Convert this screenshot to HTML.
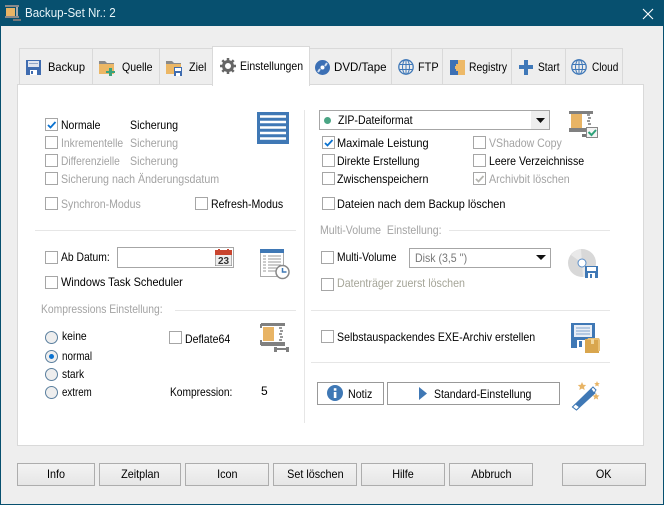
<!DOCTYPE html>
<html><head><meta charset="utf-8"><style>
html,body{margin:0;padding:0}
body{width:664px;height:505px;overflow:hidden;position:relative;background:#eee;font:12px/14px "Liberation Sans",sans-serif;color:#000}
div,svg{position:absolute}
.t{white-space:nowrap;height:14px;transform:scaleX(var(--s,.88));transform-origin:0 50%}
.d{color:#a3a3a3}
.c{width:11px;height:11px;border:1px solid #a6a6a6;background:#fff}
.r{width:11px;height:11px;border:1px solid #5a7f9e;border-radius:50%;background:#eee}
.l{background:#e6e6e6;height:1px}
.tab{top:48px;height:36px;border:1px solid #d9d9d9;border-bottom:0;border-left:0;box-sizing:border-box;background:#eee}
.b{top:463px;height:23px;box-sizing:border-box;border:1px solid #adadad;background:linear-gradient(#f3f3f3,#e6e6e6);text-align:center;line-height:21px}
.b span{display:inline-block;transform:scaleX(.9)}
</style></head><body>
<div style="left:0;top:0;width:664px;height:505px;box-sizing:border-box;border:1px solid #07506f;border-top:0"></div>
<div style="left:0;top:0;width:664px;height:26px;background:#07506f"></div>
<svg style="left:4px;top:4px" width="17" height="18" viewBox="0 0 17 18"><rect x="1" y="1" width="14" height="2" fill="#8a8a8a"/><rect x="1" y="12" width="14" height="2" fill="#8a8a8a"/><rect x="2" y="4" width="9" height="8" fill="#e8b465"/><rect x="12" y="3" width="2" height="9" fill="#aaa"/><rect x="9" y="15" width="8" height="2" fill="#777"/></svg>
<div class="t" style="--s:.89;left:25px;top:5px;color:#e8f4f8;font-size:13px;line-height:16px">Backup-Set Nr.: 2</div>
<svg style="left:642px;top:8px" width="12" height="12"><path d="M1 1L11 11M11 1L1 11" stroke="#fff" stroke-width="1.100"/></svg>

<div class="tab" style="left:19px;width:74px;border-left:1px solid #d9d9d9"></div>
<div class="tab" style="left:93px;width:67px"></div>
<div class="tab" style="left:160px;width:53px"></div>
<div class="tab" style="left:310px;width:82px"></div>
<div class="tab" style="left:392px;width:51px"></div>
<div class="tab" style="left:443px;width:69px"></div>
<div class="tab" style="left:512px;width:54px"></div>
<div class="tab" style="left:566px;width:57px"></div>
<div style="left:17px;top:84px;width:627px;height:362px;box-sizing:border-box;border:1px solid #d9d9d9;background:#fff"></div>
<div style="left:212px;top:46px;width:98px;height:40px;box-sizing:border-box;border:1px solid #d9d9d9;border-bottom:0;background:#fff"></div>

<svg style="left:26px;top:60px" width="15" height="15"><rect width="15" height="15" fill="#3f6cb0"/><rect x="2" y="1" width="11" height="6" fill="#dfe4ee"/><rect x="3" y="3" width="9" height="1" fill="#8fa5c8"/><rect x="4" y="10" width="7" height="5" fill="#fff"/><rect x="5" y="11" width="2" height="3" fill="#3f6cb0"/></svg>
<div class="t" style="--s:.925;left:48px;top:60px">Backup</div>
<svg style="left:99px;top:60px" width="16" height="16"><path d="M0 1h6l2 2h7v2H0z" fill="#8a8a8a"/><rect y="4" width="15" height="10" fill="#ecb765"/><path d="M10 8h3v3h3v2h-3v3h-3v-3H7v-2h3z" fill="#3aa27c"/></svg>
<div class="t" style="left:122px;top:60px">Quelle</div>
<svg style="left:166px;top:60px" width="16" height="16"><path d="M0 1h6l2 2h7v2H0z" fill="#8a8a8a"/><rect y="4" width="15" height="10" fill="#ecb765"/><rect x="8" y="7" width="8" height="9" fill="#3f6cb0"/><rect x="9" y="8" width="6" height="3" fill="#fff"/><rect x="10" y="13" width="4" height="3" fill="#fff"/></svg>
<div class="t" style="--s:.9;left:189px;top:60px">Ziel</div>
<svg style="left:220px;top:58px" width="16" height="16" viewBox="0 0 16 16"><circle cx="8" cy="8" r="4.500" fill="none" stroke="#666" stroke-width="3"/><path d="M8 0v3M8 13v3M0 8h3M13 8h3M2.300 2.300l2.200 2.200M11.500 11.500l2.200 2.200M13.700 2.300l-2.200 2.200M4.500 11.500l-2.200 2.200" stroke="#666" stroke-width="2.500"/></svg>
<div class="t" style="--s:.875;left:240px;top:59px">Einstellungen</div>
<svg style="left:315px;top:60px" width="15" height="15"><circle cx="7.500" cy="7.500" r="7.500" fill="#3c70b5"/><circle cx="7.500" cy="7.500" r="2" fill="#fff"/><path d="M3 12l2-3M10 6l2-3" stroke="#cfdcee" stroke-width="2"/></svg>
<div class="t" style="--s:.96;left:334px;top:60px">DVD/Tape</div>
<svg style="left:398px;top:59px" width="16" height="16"><g fill="none" stroke="#3f78b8"><circle cx="8" cy="8" r="7.200" stroke-width="1.300"/><ellipse cx="8" cy="8" rx="3.500" ry="7.200"/><path d="M1 5.500h14M1 10.500h14M8 1v14"/></g></svg>
<div class="t" style="--s:.91;left:418px;top:60px">FTP</div>
<svg style="left:450px;top:60px" width="15" height="15"><rect width="15" height="15" fill="#edb968"/><path d="M0 0h8v4H6v2H5v3h1v2h2v4H0z" fill="#3d71b5"/></svg>
<div class="t" style="--s:.864;left:469px;top:60px">Registry</div>
<svg style="left:519px;top:60px" width="14" height="15"><path d="M5 0h4v5h5v4H9v6H5V9H0V5h5z" fill="#3f78b8"/></svg>
<div class="t" style="--s:.85;left:538px;top:60px">Start</div>
<svg style="left:571px;top:59px" width="16" height="16"><g fill="none" stroke="#3f78b8"><circle cx="8" cy="8" r="7.200" stroke-width="1.300"/><ellipse cx="8" cy="8" rx="3.500" ry="7.200"/><path d="M1 5.500h14M1 10.500h14M8 1v14"/></g></svg>
<div class="t" style="--s:.84;left:592px;top:60px">Cloud</div>

<div style="left:304px;top:110px;width:1px;height:313px;background:#e6e6e6"></div>

<div class="c" style="left:45px;top:118px"></div><svg style="left:47px;top:121px" width="10" height="8"><path d="M1 4l2.500 2.500L8.500 1" fill="none" stroke="#0a72d0" stroke-width="1.800"/></svg>
<div class="t" style="--s:.87;left:61px;top:118px">Normale</div><div class="t" style="--s:.89;left:130px;top:118px">Sicherung</div>
<div class="c" style="left:45px;top:136px"></div><div class="t d" style="--s:.863;left:61px;top:136px">Inkrementelle</div><div class="t d" style="--s:.89;left:130px;top:136px">Sicherung</div>
<div class="c" style="left:45px;top:154px"></div><div class="t d" style="--s:.85;left:61px;top:154px">Differenzielle</div><div class="t d" style="--s:.89;left:130px;top:154px">Sicherung</div>
<div class="c" style="left:45px;top:172px"></div><div class="t d" style="--s:.888;left:61px;top:172px">Sicherung nach Änderungsdatum</div>
<div class="c" style="left:45px;top:197px"></div><div class="t d" style="left:61px;top:197px">Synchron-Modus</div>
<div class="c" style="left:195px;top:197px"></div><div class="t" style="left:211px;top:197px">Refresh-Modus</div>
<svg style="left:257px;top:112px" width="32" height="32"><rect width="32" height="32" fill="#3f78b5"/><path d="M3 4.500h26M3 10h26M3 15.500h26M3 21h26M3 26.500h26" stroke="#fff" stroke-width="2.500"/></svg>

<div class="l" style="left:35px;top:230px;width:261px"></div>
<div class="c" style="left:45px;top:251px"></div><div class="t" style="--s:.86;left:61px;top:250px">Ab Datum:</div>
<div style="left:117px;top:247px;width:117px;height:21px;box-sizing:border-box;border:1px solid #a6a6a6"></div>
<svg style="left:215px;top:249px" width="17" height="17"><rect y="3" width="17" height="14" fill="#eee" stroke="#777"/><rect width="17" height="5" y="1" fill="#c9452f"/><path d="M4 0v3M13 0v3" stroke="#c9452f" stroke-width="2"/><text x="8.500" y="15" font-size="10" font-weight="bold" font-family="Liberation Sans" text-anchor="middle" fill="#333">23</text></svg>
<div class="c" style="left:45px;top:276px"></div><div class="t" style="--s:.91;left:61px;top:275px">Windows Task Scheduler</div>
<svg style="left:260px;top:249px" width="30" height="31"><rect x=".5" y=".5" width="23" height="27" fill="#fff" stroke="#aaa"/><rect width="24" height="4" fill="#3f78b5"/><path d="M3 7h3M8 7h13M3 10h3M8 10h13M3 13h3M8 13h13M3 16h3M8 16h13M3 19h3M8 19h10M3 22h3M8 22h8" stroke="#999"/><circle cx="22.500" cy="23" r="6.500" fill="#fff" stroke="#888" stroke-width="1.500"/><path d="M22.500 19v4h4" fill="none" stroke="#3f78b5" stroke-width="1.500"/></svg>

<div class="t d" style="--s:.86;left:41px;top:302px">Kompressions Einstellung:</div><div class="l" style="left:175px;top:310px;width:121px"></div>
<div class="r" style="left:45px;top:331px"></div><div class="t" style="--s:.86;left:62px;top:329px">keine</div>
<div class="r" style="left:45px;top:350px"></div><div style="left:49px;top:354px;width:5px;height:5px;border-radius:50%;background:#0a72d0"></div><div class="t" style="--s:.82;left:62px;top:349px">normal</div>
<div class="r" style="left:45px;top:368px"></div><div class="t" style="--s:.85;left:62px;top:367px">stark</div>
<div class="r" style="left:45px;top:386px"></div><div class="t" style="--s:.81;left:62px;top:385px">extrem</div>
<div class="c" style="left:169px;top:331px"></div><div class="t" style="left:185px;top:332px">Deflate64</div>
<div class="t" style="--s:.85;left:170px;top:385px">Kompression:</div><div class="t" style="--s:1;left:261px;top:384px">5</div>
<svg style="left:260px;top:322px" width="30" height="31"><path d="M1 1h24v3H1zM1 20h24v4H1z" fill="#808080"/><path d="M0 2h2v4H0zM0 18h2v5H0z" fill="#808080"/><rect x="3" y="5" width="11" height="14" fill="#e8b465"/><path d="M19 5h3v2h-3zM20 8h3v2h-3zM19 11h3v2h-3zM20 14h3v2h-3zM19 17h3v2h-3z" fill="#999"/><path d="M14 26h15v2H14zM14 25h3v5h-3zM26 25h3v5h-3z" fill="#808080"/></svg>

<div style="left:319px;top:110px;width:231px;height:20px;box-sizing:border-box;border:1px solid #a6a6a6;background:#fff"></div>
<div style="left:531px;top:111px;width:18px;height:18px;background:#eee"></div>
<svg style="left:536px;top:118px" width="9" height="5"><path d="M0 0h9L4.500 5z" fill="#111"/></svg>
<div style="left:324px;top:117px;width:7px;height:7px;border-radius:50%;background:#4aa584"></div>
<div class="t" style="left:338px;top:113px">ZIP-Dateiformat</div>
<svg style="left:569px;top:109px" width="30" height="30"><path d="M0 2h24v3H0zM0 19h20v4H0z" fill="#808080"/><rect x="2" y="5" width="11" height="14" fill="#e8b465"/><path d="M18 5h3v2h-3zM19 8h3v2h-3zM18 11h3v2h-3zM19 14h3v2h-3z" fill="#999"/><rect x="17.500" y="18.500" width="11" height="10" fill="#f4f4f4" stroke="#888"/><path d="M19.500 23l3 3 4.500-5" fill="none" stroke="#2fa27a" stroke-width="2"/><rect x="13" y="25" width="4" height="3" fill="#777"/></svg>
<div class="c" style="left:322px;top:136px"></div><svg style="left:324px;top:139px" width="10" height="8"><path d="M1 4l2.500 2.500L8.500 1" fill="none" stroke="#0a72d0" stroke-width="1.800"/></svg><div class="t" style="--s:.916;left:337px;top:136px">Maximale Leistung</div>
<div class="c" style="left:473px;top:136px"></div><div class="t d" style="left:489px;top:136px">VShadow Copy</div>
<div class="c" style="left:322px;top:154px"></div><div class="t" style="--s:.87;left:337px;top:154px">Direkte Erstellung</div>
<div class="c" style="left:473px;top:154px"></div><div class="t" style="left:489px;top:154px">Leere Verzeichnisse</div>
<div class="c" style="left:322px;top:172px"></div><div class="t" style="--s:.89;left:337px;top:172px">Zwischenspeichern</div>
<div class="c" style="left:473px;top:172px"></div><svg style="left:475px;top:175px" width="10" height="8"><path d="M1 4l2.500 2.500L8.500 1" fill="none" stroke="#b5b5b0" stroke-width="1.800"/></svg><div class="t d" style="--s:.89;left:489px;top:172px">Archivbit löschen</div>
<div class="c" style="left:322px;top:197px"></div><div class="t" style="--s:.908;left:337px;top:197px">Dateien nach dem Backup löschen</div>

<div class="t d" style="left:320px;top:223px">Multi-Volume&nbsp; Einstellung:</div><div class="l" style="left:449px;top:230px;width:161px"></div>
<div class="c" style="left:321px;top:251px"></div><div class="t" style="--s:.857;left:337px;top:250px">Multi-Volume</div>
<div style="left:409px;top:248px;width:142px;height:20px;box-sizing:border-box;border:1px solid #a6a6a6;background:#fff"></div>
<div class="t" style="left:415px;top:251px;color:#777">Disk (3,5 '')</div>
<svg style="left:536px;top:255px" width="10" height="5"><path d="M0 0h10L5 5z" fill="#111"/></svg>
<div class="c" style="left:321px;top:278px"></div><div class="t" style="--s:.888;left:337px;top:276px;color:#a5a598">Datenträger zuerst löschen</div>
<svg style="left:568px;top:249px" width="31" height="31"><circle cx="14" cy="14" r="14" fill="#d8d8d8"/><path d="M14 14L3 6A14 14 0 0 1 13 0zM14 14L25 22A14 14 0 0 1 15 28z" fill="#e9e9e9"/><circle cx="14" cy="14" r="4" fill="#fff" stroke="#5a8ec8"/><rect x="17" y="17" width="13" height="12" fill="#3f78b5"/><rect x="19" y="18" width="9" height="4" fill="#fff"/><rect x="20" y="24" width="7" height="5" fill="#fff"/><rect x="22" y="25" width="2" height="4" fill="#3f78b5"/></svg>

<div class="l" style="left:311px;top:310px;width:299px"></div>
<div class="c" style="left:321px;top:330px"></div><div class="t" style="--s:.884;left:337px;top:330px">Selbstauspackendes EXE-Archiv erstellen</div>
<svg style="left:571px;top:323px" width="30" height="31"><rect width="24" height="25" fill="#3f78b5"/><rect x="3" y="2" width="18" height="12" fill="#e8eef6"/><path d="M5 5h14M5 8h14M5 11h14" stroke="#7fa4cf"/><rect x="6" y="17" width="11" height="8" fill="#fff"/><rect x="8" y="18" width="3" height="6" fill="#3f78b5"/><rect x="14" y="16" width="14" height="14" fill="#d9a64e"/><path d="M17 15h11l1 2v11h-2V17H16z" fill="#e8bf74"/><rect x="20" y="16" width="3" height="5" fill="#f1d79e"/></svg>
<div class="l" style="left:311px;top:362px;width:299px"></div>

<div style="left:317px;top:382px;width:67px;height:23px;box-sizing:border-box;border:1px solid #999;background:#fff"></div>
<svg style="left:327px;top:385px" width="16" height="16"><circle cx="8" cy="8" r="8" fill="#3f78b5"/><rect x="6.800" y="7" width="2.600" height="6" fill="#fff"/><rect x="6.800" y="3.200" width="2.600" height="2.500" fill="#fff"/></svg>
<div class="t" style="--s:.89;left:348px;top:387px">Notiz</div>
<div style="left:387px;top:382px;width:173px;height:23px;box-sizing:border-box;border:1px solid #999;background:#fff"></div>
<svg style="left:419px;top:387px" width="8" height="13"><path d="M0 0l8 6.500L0 13z" fill="#3f78b5"/></svg>
<div class="t" style="--s:.874;left:434px;top:387px">Standard-Einstellung</div>
<svg style="left:571px;top:381px" width="30" height="30"><path d="M1.500 26L20 8l4 4L5.500 29z" fill="#3f78b5" stroke="#3f78b5"/><path d="M1.500 26l3-3 4 3-3 3zM20 8l2-2 3 3-2 3z" fill="#fff" stroke="#3f78b5"/><path d="M11 1l1.200 2.800 3 .2-2.200 2 .7 3L11 7.500 8.300 9 9 6 6.800 4l3-.2zM26 0l.8 2 2 .2-1.500 1.300.5 2L26 4.500l-1.800 1 .5-2-1.500-1.300 2-.2zM25 12l1 2.300 2.500.2-1.900 1.600.6 2.500-2.200-1.300-2.200 1.300.6-2.500-1.900-1.600 2.500-.2z" fill="#e8b465"/></svg>

<div class="b" style="left:17px;width:78px"><span>Info</span></div>
<div class="b" style="left:99px;width:82px"><span>Zeitplan</span></div>
<div class="b" style="left:185px;width:84px"><span>Icon</span></div>
<div class="b" style="left:273px;width:84px"><span>Set löschen</span></div>
<div class="b" style="left:361px;width:84px"><span>Hilfe</span></div>
<div class="b" style="left:449px;width:84px"><span>Abbruch</span></div>
<div class="b" style="left:562px;width:84px"><span>OK</span></div>
</body></html>
